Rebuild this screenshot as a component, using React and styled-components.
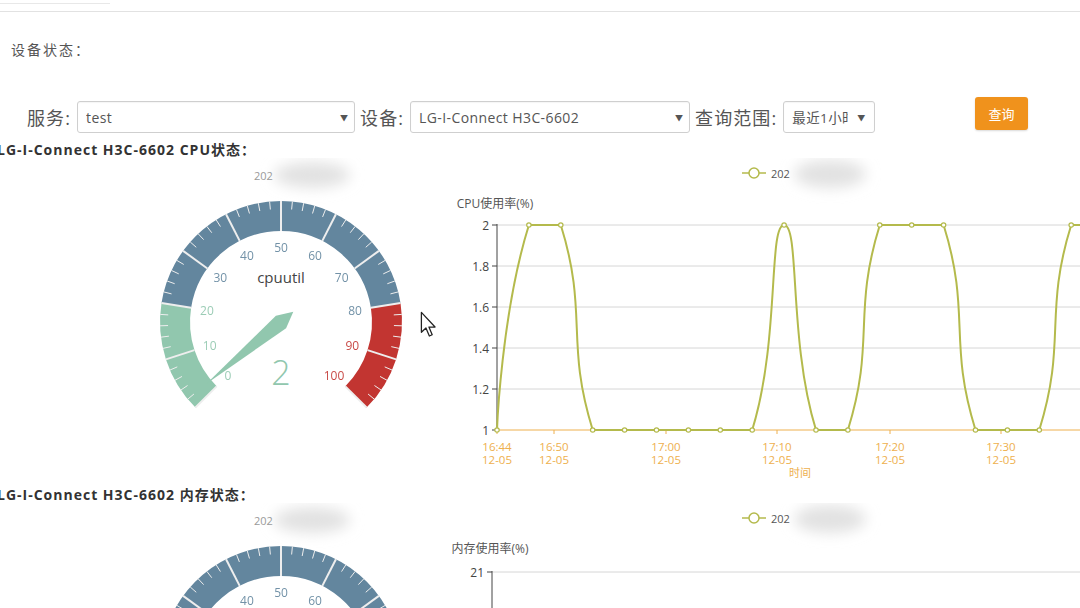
import React from 'react';
import styled, { createGlobalStyle } from 'styled-components';

const GREEN = '#91c7ae';
const BLUE = '#63869e';
const RED = '#c23531';
const SERIES = '#b4ba4c';
const AXIS_ORANGE = '#eeb04e';

const GlobalStyle = createGlobalStyle`
  html, body {
    margin: 0;
    padding: 0;
    background: #ffffff;
    overflow: hidden;
  }
  body {
    font-family: "Open Sans", "Noto Sans CJK SC", sans-serif;
    color: #555555;
  }
`;

const Page = styled.div`
  position: relative;
  width: 1080px;
  height: 608px;
  overflow: hidden;
`;

const TopBar = styled.div`
  box-sizing: border-box;
  height: 12px;
  padding-top: 3px;
  border-bottom: 1px solid #e2e2e2;
`;

const TabLine = styled.div`
  width: 110px;
  height: 1px;
  background: #e8e8e8;
`;

const StatusLabel = styled.div`
  margin: 29px 0 0 11px;
  font-size: 14px;
  letter-spacing: 2px;
  line-height: 18px;
  color: #555555;
`;

const FormRow = styled.div`
  display: flex;
  align-items: center;
  height: 32px;
  margin-top: 42px;
  padding-left: 27px;
`;

const FieldLabel = styled.span`
  font-size: 18px;
  letter-spacing: 1.1px;
  color: #555555;
  margin: 0 6px 0 ${p => p.$gap || 0}px;
  white-space: nowrap;
`;

const Select = styled.div`
  display: flex;
  align-items: center;
  box-sizing: border-box;
  width: ${p => p.$width}px;
  height: 32px;
  padding-left: 8px;
  border: 1px solid #cfcfcf;
  border-radius: 3px;
  background: #ffffff;
  box-shadow: inset 0 1px 1px rgba(0, 0, 0, 0.04);
`;

const SelectValue = styled.span`
  flex: 1;
  overflow: hidden;
  white-space: nowrap;
  font-size: ${p => p.$size || 14}px;
  letter-spacing: 0.4px;
  color: #555555;
`;

const Caret = styled.span`
  width: ${p => p.$width || 20}px;
  text-align: center;
  font-size: 8px;
  color: #555555;
`;

const QueryButton = styled.button`
  margin: 0 52px 7px auto;
  width: 53px;
  height: 33px;
  border: none;
  border-radius: 3px;
  background: #f0921c;
  color: #ffffff;
  font-family: "Noto Sans CJK SC", sans-serif;
  font-size: 13px;
  box-shadow: 0 1px 2px rgba(0, 0, 0, 0.15);
`;

const SectionTitle = styled.div`
  margin: ${p => p.$top || 0}px 0 0 -3px;
  height: 16px;
  line-height: 16px;
  font-size: 14px;
  letter-spacing: 1px;
  font-weight: 700;
  color: #333333;
  white-space: nowrap;
`;

const ChartRow = styled.div`
  display: flex;
  height: 329px;
`;

const GaugeBox = styled.svg`
  width: 440px;
  height: 329px;
  flex: none;
  font-family: "Open Sans", "Noto Sans CJK SC", sans-serif;
`;

const LineBox = styled.svg`
  flex: 1;
  height: 329px;
  font-family: "Open Sans", "Noto Sans CJK SC", sans-serif;
`;

const Cursor = styled.svg`
  position: absolute;
  left: 419px;
  top: 311px;
  width: 19px;
  height: 27px;
`;

const polar = (cx, cy, r, deg) => {
  const a = (deg * Math.PI) / 180;
  return [cx + r * Math.cos(a), cy - r * Math.sin(a)];
};
const valAngle = v => 225 - v * 2.7;

const arcPath = (cx, cy, r, v0, v1) => {
  const [x0, y0] = polar(cx, cy, r, valAngle(v0));
  const [x1, y1] = polar(cx, cy, r, valAngle(v1));
  const large = (v1 - v0) * 2.7 > 180 ? 1 : 0;
  return `M${x0} ${y0} A${r} ${r} 0 ${large} 1 ${x1} ${y1}`;
};

const bandColor = v => (v <= 20 ? GREEN : v <= 80 ? BLUE : RED);

const Smudge = ({ id, x, y, rx, ry }) => (
  <>
    <defs>
      <filter id={id} x="-50%" y="-80%" width="200%" height="260%">
        <feGaussianBlur stdDeviation="7" />
      </filter>
    </defs>
    <ellipse cx={x} cy={y} rx={rx} ry={ry} fill="#e2e2e2" filter={`url(#${id})`} />
  </>
);

const Gauge = ({ id, value, title }) => {
  const cx = 281;
  const cy = 164;
  const R = 121;
  const W = 30;
  const splits = [];
  const ticks = [];
  for (let v = 0; v <= 100; v += 2) {
    const a = valAngle(v);
    const major = v % 10 === 0;
    const [x0, y0] = polar(cx, cy, R, a);
    const [x1, y1] = polar(cx, cy, major ? R - W : R - 8, a);
    (major ? splits : ticks).push(
      <line key={v} x1={x0} y1={y0} x2={x1} y2={y1} stroke="#eeeeee" strokeWidth={major ? 2 : 1} />
    );
  }
  const labels = [];
  for (let v = 0; v <= 100; v += 10) {
    const [x, y] = polar(cx, cy, 75, valAngle(v));
    labels.push(
      <text key={v} x={x} y={y} fontSize="12" fill={bandColor(v)} opacity="0.9" textAnchor="middle" dominantBaseline="central">
        {v}
      </text>
    );
  }
  const a = (valAngle(value) * Math.PI) / 180;
  const d = [Math.cos(a), -Math.sin(a)];
  const p = [-d[1], d[0]];
  const len = R * 0.8;
  const needle = [
    [cx - d[0] * 16, cy - d[1] * 16],
    [cx + p[0] * 8, cy + p[1] * 8],
    [cx + d[0] * len, cy + d[1] * len],
    [cx - p[0] * 8, cy - p[1] * 8],
  ]
    .map(q => q.join(','))
    .join(' ');

  return (
    <GaugeBox viewBox="0 0 440 329">
      <Smudge id={`${id}-blur`} x={312} y={17} rx={38} ry={13} />
      <text x={254} y={17} fontSize="11" fill="#9a9a9a" dominantBaseline="central">202</text>
      <path d={arcPath(cx, cy, R - W / 2, 0, 20)} stroke={GREEN} strokeWidth={W} fill="none" />
      <path d={arcPath(cx, cy, R - W / 2, 20, 80)} stroke={BLUE} strokeWidth={W} fill="none" />
      <path d={arcPath(cx, cy, R - W / 2, 80, 100)} stroke={RED} strokeWidth={W} fill="none" />
      {ticks}
      {splits}
      {labels}
      <text x={cx} y={cy - 45} fontSize="15" fill="#444444" textAnchor="middle" dominantBaseline="central">
        {title}
      </text>
      <polygon points={needle} fill={bandColor(value)} />
      <text x={cx} y={cy + 50} fontSize="34" fontWeight="300" fill={bandColor(value)} textAnchor="middle" dominantBaseline="central">
        {value}
      </text>
    </GaugeBox>
  );
};

// echarts-style smoothing (smooth 0.5, clamped to the bounding box of the points)
const smoothPath = pts => {
  const ys = pts.map(q => q[1]);
  const minY = Math.min(...ys);
  const maxY = Math.max(...ys);
  const cps = [];
  pts.forEach((pt, i) => {
    if (i === 0 || i === pts.length - 1) {
      cps.push(pt);
      return;
    }
    const prev = pts[i - 1];
    const next = pts[i + 1];
    const v = [(next[0] - prev[0]) * 0.5, (next[1] - prev[1]) * 0.5];
    let d0 = Math.hypot(pt[0] - prev[0], pt[1] - prev[1]);
    let d1 = Math.hypot(pt[0] - next[0], pt[1] - next[1]);
    const sum = d0 + d1;
    if (sum) {
      d0 /= sum;
      d1 /= sum;
    }
    const clamp = y => Math.min(maxY, Math.max(minY, y));
    cps.push([pt[0] - v[0] * d0, clamp(pt[1] - v[1] * d0)]);
    cps.push([pt[0] + v[0] * d1, clamp(pt[1] + v[1] * d1)]);
  });
  let d = `M${pts[0][0]} ${pts[0][1]}`;
  for (let i = 1; i < pts.length; i++) {
    const c1 = cps[(i - 1) * 2];
    const c2 = cps[(i - 1) * 2 + 1];
    d += ` C${c1[0]} ${c1[1]} ${c2[0]} ${c2[1]} ${pts[i][0]} ${pts[i][1]}`;
  }
  return d;
};

const LineChart = ({ id, yName, axisX, top, yTicks, yMin, yMax, data, xLabels }) => {
  const bottom = top + (yTicks.length - 1) * 41;
  const yOf = v => bottom - ((v - yMin) / (yMax - yMin)) * (bottom - top);
  const pts = data.map((v, i) => [axisX + i * 31.9, yOf(v)]);
  const showXAxis = xLabels.length > 0;
  return (
    <LineBox viewBox="0 0 640 329" preserveAspectRatio="xMinYMin slice">
      <Smudge id={`${id}-blur`} x={390} y={16} rx={36} ry={14} />
      <line x1={302} y1={15} x2={326} y2={15} stroke={SERIES} strokeWidth="1.5" />
      <circle cx={314} cy={15} r={5} fill="#ffffff" stroke={SERIES} strokeWidth="1.5" />
      <text x={331} y={15} fontSize="11" fill="#555555" dominantBaseline="central">202</text>
      <text x={axisX - 2} y={45} fontSize="12" fill="#555555" textAnchor="middle" dominantBaseline="central">
        {yName}
      </text>
      {yTicks.map((t, i) => {
        const y = top + i * 41;
        return (
          <g key={t}>
            {i < yTicks.length - 1 && <line x1={axisX} y1={y} x2={640} y2={y} stroke="#d6d6d6" strokeWidth="1" />}
            <line x1={axisX - 5} y1={y} x2={axisX} y2={y} stroke="#444444" strokeWidth="1" />
            <text x={axisX - 8} y={y} fontSize="12" fill="#444444" textAnchor="end" dominantBaseline="central">
              {t}
            </text>
          </g>
        );
      })}
      <line x1={axisX} y1={top - 1} x2={axisX} y2={bottom} stroke="#444444" strokeWidth="1" />
      {showXAxis && (
        <>
          <line x1={axisX} y1={bottom} x2={640} y2={bottom} stroke={AXIS_ORANGE} strokeWidth="1" />
          {xLabels.map(([x, time]) => (
            <g key={time}>
              <line x1={x} y1={bottom} x2={x} y2={bottom + 4} stroke={AXIS_ORANGE} strokeWidth="1" />
              <text x={x} y={bottom + 16} fontSize="11.5" fill={AXIS_ORANGE} textAnchor="middle" dominantBaseline="central">
                {time}
              </text>
              <text x={x} y={bottom + 29} fontSize="11.5" fill={AXIS_ORANGE} textAnchor="middle" dominantBaseline="central">
                12-05
              </text>
            </g>
          ))}
          <text x={360} y={bottom + 42} fontSize="11" fill={AXIS_ORANGE} textAnchor="middle" dominantBaseline="central">
            时间
          </text>
        </>
      )}
      {pts.length > 1 && (
        <>
          <path d={smoothPath(pts)} stroke={SERIES} strokeWidth="2" fill="none" />
          {pts.map(([x, y], i) => (
            <circle key={i} cx={x} cy={y} r="2.2" fill="#ffffff" stroke={SERIES} strokeWidth="1.2" />
          ))}
        </>
      )}
    </LineBox>
  );
};

const cpuData = [1, 2, 2, 1, 1, 1, 1, 1, 1, 2, 1, 1, 2, 2, 2, 1, 1, 1, 2, 2, 2];
const cpuXLabels = [
  [57, '16:44'],
  [114, '16:50'],
  [226, '17:00'],
  [337, '17:10'],
  [450, '17:20'],
  [561, '17:30'],
];

const App = () => (
  <Page>
    <GlobalStyle />
    <TopBar>
      <TabLine />
    </TopBar>
    <StatusLabel>设备状态：</StatusLabel>
    <FormRow>
      <FieldLabel>服务:</FieldLabel>
      <Select $width={278}>
        <SelectValue>test</SelectValue>
        <Caret>▼</Caret>
      </Select>
      <FieldLabel $gap={5}>设备:</FieldLabel>
      <Select $width={280}>
        <SelectValue>LG-I-Connect H3C-6602</SelectValue>
        <Caret>▼</Caret>
      </Select>
      <FieldLabel $gap={5}>查询范围:</FieldLabel>
      <Select $width={92}>
        <SelectValue $size={13.5}>最近1小时</SelectValue>
        <Caret $width={26}>▼</Caret>
      </Select>
      <QueryButton>查询</QueryButton>
    </FormRow>

    <SectionTitle $top={9}>LG-I-Connect H3C-6602 CPU状态：</SectionTitle>
    <ChartRow>
      <Gauge id="cpu" value={2} title="cpuutil" />
      <LineChart
        id="cpu-line"
        yName="CPU使用率(%)"
        axisX={57}
        top={67}
        yTicks={['2', '1.8', '1.6', '1.4', '1.2', '1']}
        yMin={1}
        yMax={2}
        data={cpuData}
        xLabels={cpuXLabels}
      />
    </ChartRow>

    <SectionTitle>LG-I-Connect H3C-6602 内存状态：</SectionTitle>
    <ChartRow>
      <Gauge id="mem" value={20} title="memutil" />
      <LineChart
        id="mem-line"
        yName="内存使用率(%)"
        axisX={52}
        top={69}
        yTicks={['21', '19', '17', '15', '13', '11']}
        yMin={11}
        yMax={21}
        data={[]}
        xLabels={[]}
      />
    </ChartRow>

    <Cursor viewBox="0 0 12 19">
      <path d="M1 1 L1 15 L4.2 12 L6.6 17.6 L8.6 16.7 L6.3 11.3 L10.6 11.3 Z" fill="#ffffff" stroke="#222222" strokeWidth="0.9" strokeLinejoin="round" />
    </Cursor>
  </Page>
);

export default App;
